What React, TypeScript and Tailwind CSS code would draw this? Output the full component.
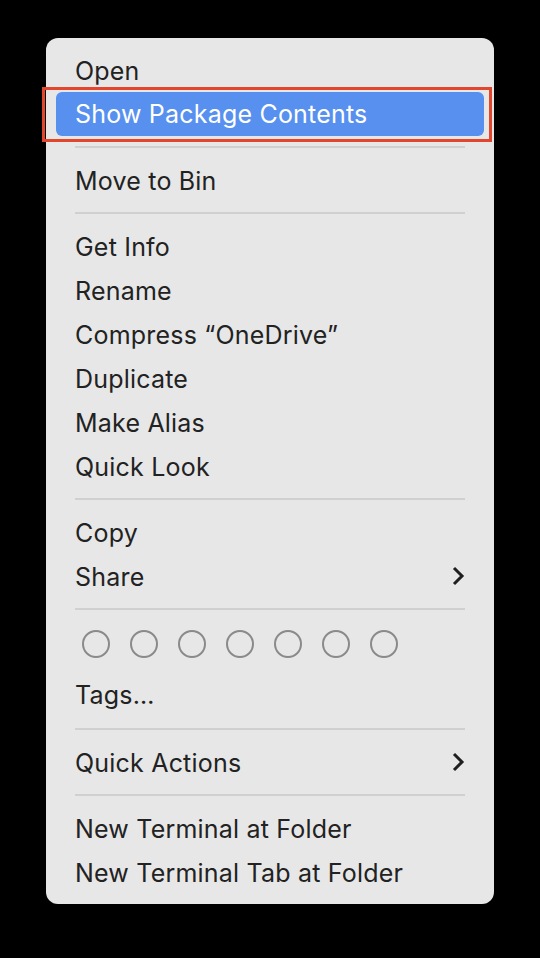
import React from "react";

const Sep = () => <div className="mx-[19px] my-[10px] h-[2px] bg-[#d0d0d0]" />;

const Item = ({ label, chevron }: { label: string; chevron?: boolean }) => (
  <div className="flex h-[44px] items-center justify-between pl-[19px] pr-[19px] pt-[3px] text-[25px] tracking-[0.2px] text-[#222222]">
    <span>{label}</span>
    {chevron && (
      <svg width="14" height="20" viewBox="0 0 14 20" fill="none" className="-mt-[3px]">
        <path d="M3 2 L11 10 L3 18" stroke="#1f1f1f" strokeWidth="3" strokeLinecap="butt" strokeLinejoin="miter" />
      </svg>
    )}
  </div>
);

export default function App() {
  return (
    <div
      className="min-h-[958px] w-[540px] bg-black pt-[38px] pl-[46px]"
      style={{ fontFamily: "Inter, 'Noto Sans', sans-serif" }}
    >
      <div className="h-[866px] w-[448px] rounded-[12px] bg-[#e7e7e7] px-[10px] pt-[10px]">
        <Item label="Open" />
        <div className="relative">
          <div className="flex h-[44px] items-center rounded-[6px] bg-[#5790ef] pl-[19px] pt-[2px] text-[25px] tracking-[0.2px] text-white">
            Show Package Contents
          </div>
          <div className="pointer-events-none absolute left-[-14px] top-[-5px] h-[55px] w-[450px] border-[3px] border-[#e2462c]" />
        </div>
        <Sep />
        <Item label="Move to Bin" />
        <Sep />
        <Item label="Get Info" />
        <Item label="Rename" />
        <Item label="Compress “OneDrive”" />
        <Item label="Duplicate" />
        <Item label="Make Alias" />
        <Item label="Quick Look" />
        <Sep />
        <Item label="Copy" />
        <Item label="Share" chevron />
        <Sep />
        <div className="flex h-[54px] gap-[20px] pl-[26px] pt-[10px]">
          {[0, 1, 2, 3, 4, 5, 6].map((i) => (
            <div key={i} className="h-[28px] w-[28px] rounded-full border-2 border-[#8a8a8a]" />
          ))}
        </div>
        <div className="flex h-[44px] items-center pl-[19px] text-[25px] tracking-[0.2px] text-[#222222]">
          Tags…
        </div>
        <Sep />
        <Item label="Quick Actions" chevron />
        <Sep />
        <Item label="New Terminal at Folder" />
        <Item label="New Terminal Tab at Folder" />
      </div>
    </div>
  );
}
